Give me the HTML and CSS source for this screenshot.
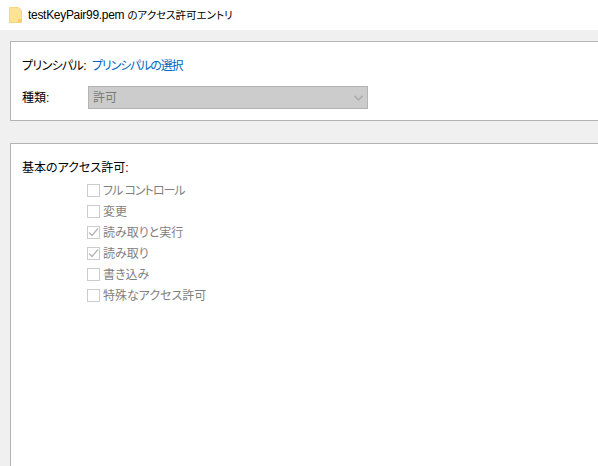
FILE: index.html
```html
<!DOCTYPE html>
<html lang="ja">
<head>
<meta charset="utf-8">
<title>testKeyPair99.pem のアクセス許可エントリ</title>
<link rel="stylesheet" href="styles.css">
</head>
<body>
<header class="titlebar">
  <svg class="file-icon" width="13" height="16" viewBox="0 0 13 16"><path d="M.5.500h9l3 3v12H.5z" fill="#fde394" stroke="#f6d77c"/><path d="M9 12h3.500v3.500H9z" fill="#f5cf6a"/></svg>
  <span class="title-text">testKeyPair99.pem <span class="title-ja">のアクセス許可エントリ</span></span>
</header>
<main class="content">
  <section class="panel principal">
    <div class="row principal-row">
      <span class="label tight">プリンシパル:</span>
      <a class="link">プリンシパルの選択</a>
    </div>
    <div class="row type-row">
      <span class="label type-label">種類:</span>
      <div class="select">
        <span>許可</span>
        <svg width="9" height="6" viewBox="0 0 9 6"><path d="M.5.800 4.500 4.800 8.500.8" fill="none" stroke="#adadad" stroke-width="1.600"/></svg>
      </div>
    </div>
  </section>
  <section class="panel perms">
    <h2>基本のアクセス許可:</h2>
    <ul class="checks">
      <li><span class="box"></span><span class="full">フル コントロール</span></li>
      <li><span class="box"></span>変更</li>
      <li><span class="box"><svg width="11" height="11" viewBox="0 0 11 11"><path d="M1 5.500 4 8.500 10 1.500" fill="none" stroke="#b5b5b5" stroke-width="1.300"/></svg></span>読み取りと実行</li>
      <li><span class="box"><svg width="11" height="11" viewBox="0 0 11 11"><path d="M1 5.500 4 8.500 10 1.500" fill="none" stroke="#b5b5b5" stroke-width="1.300"/></svg></span>読み取り</li>
      <li><span class="box"></span>書き込み</li>
      <li><span class="box"></span>特殊なアクセス許可</li>
    </ul>
  </section>
</main>
</body>
</html>
```
FILE: styles.css
```css
* { box-sizing: border-box; }
html, body { margin: 0; height: 100%; overflow: hidden; }
body {
  width: 598px;
  height: 466px;
  display: flex;
  flex-direction: column;
  background: #f0f0f0;
  color: #000;
  font: 12px/16px "Liberation Sans", "Noto Sans CJK JP", sans-serif;
  font-feature-settings: "palt";
}
.titlebar {
  height: 30px;
  flex: none;
  display: flex;
  align-items: center;
  gap: 6px;
  padding: 0 0 1px 9px;
  background: #fff;
}
.file-icon { flex: none; }
.title-text { letter-spacing: -0.3px; }
.title-ja { font-size: 10.5px; letter-spacing: 0; }
.content {
  flex: 1;
  display: flex;
  flex-direction: column;
  gap: 22px;
  padding: 11px 0 0 10px;
}
.panel {
  background: #fff;
  border: 1px solid #b4b4b4;
  border-right: 0;
}
.principal { height: 80px; padding: 15px 0 0 11px; }
.row { display: flex; align-items: center; }
.principal-row { height: 18px; gap: 6px; }
.tight { letter-spacing: -0.6px; }
.link { color: #0067c0; letter-spacing: -1.1px; }
.type-row { margin-top: 11px; height: 23px; }
.type-label { width: 66px; }
.select {
  width: 280px;
  height: 23px;
  display: flex;
  align-items: center;
  justify-content: space-between;
  padding: 0 4px 0 4px;
  background: #cccccc;
  border: 1px solid #b4b4b4;
  color: #7a7a7a;
}
.perms { flex: 1; padding: 15px 0 0 11px; border-bottom: 0; }
h2 { margin: 0; font: inherit; height: 18px; line-height: 18px; }
.checks { list-style: none; margin: 3px 0 0 65px; padding: 0; color: #7f7f7f; }
.checks li { height: 21px; display: flex; align-items: center; gap: 3px; }
.full { letter-spacing: -1px; }
.box {
  width: 13px;
  height: 13px;
  flex: none;
  display: flex;
  align-items: center;
  justify-content: center;
  border: 1px solid #cccccc;
  background: #fff;
}
```
